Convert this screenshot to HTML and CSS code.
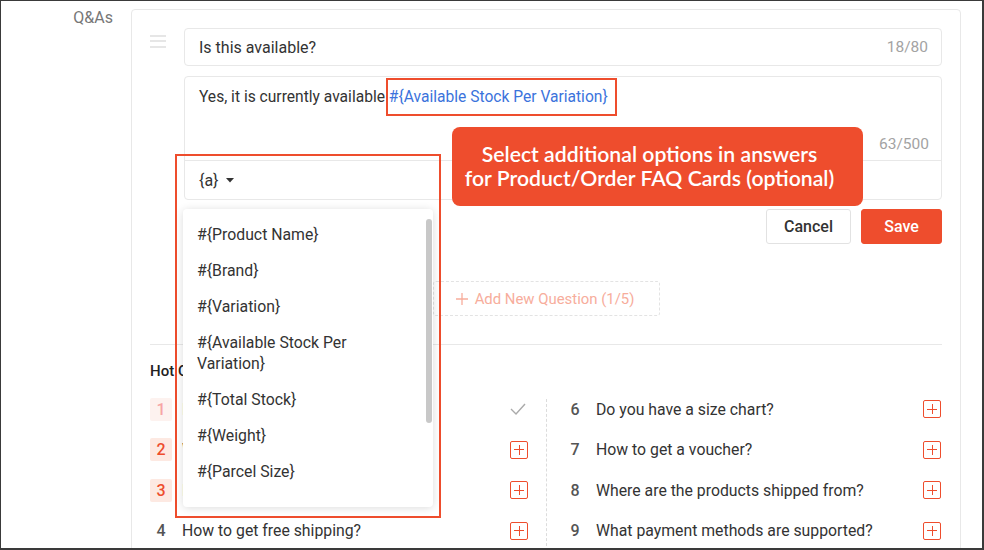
FILE: index.html
```html
<!DOCTYPE html>
<html>
<head>
<meta charset="utf-8">
<link rel="stylesheet" href="styles.css">
</head>
<body>
<div class="frame">
  <div class="section">
    <div class="label">Q&amp;As</div>
    <div class="card">
      <div class="qa-item">
        <div class="handle">
          <svg width="16" height="14" viewBox="0 0 16 14"><rect x="0" y="0" width="16" height="2" fill="#e6e6e6"/><rect x="0" y="5" width="16" height="2" fill="#e6e6e6"/><rect x="0" y="11" width="16" height="2" fill="#e6e6e6"/></svg>
        </div>
        <div class="qa-fields">
          <div class="q-input"><span class="q-text">Is this available?</span><span class="count">18/80</span></div>
          <div class="a-box">
            <div class="a-main">
              <div class="a-text">Yes, it is currently available <span class="var">#{Available Stock Per Variation}</span></div>
              <div class="count a-count">63/500</div>
            </div>
            <div class="a-toolbar"><span class="var-picker">{a}</span><svg class="caret" width="8" height="5" viewBox="0 0 8 5"><path d="M0 0h8L4 4.5z" fill="#333"/></svg></div>
          </div>
          <div class="actions"><button class="btn btn-cancel">Cancel</button><button class="btn btn-save">Save</button></div>
        </div>
      </div>
      <div class="add-row">
        <div class="add-btn"><svg width="12" height="12" viewBox="0 0 12 12"><path d="M6 0v12M0 6h12" stroke="#f7ad9c" stroke-width="1.3"/></svg><span>Add New Question (1/5)</span></div>
      </div>
      <div class="divider"></div>
      <div class="hot-title">Hot Questions</div>
      <div class="hot-grid">
        <div class="hot-col">
          <div class="hot-row faded"><span class="num badge">1</span><span class="hq">Is this available?</span><svg class="check" width="16" height="12" viewBox="0 0 16 12"><path d="M1 6l5 5L15 1" fill="none" stroke="#aaa" stroke-width="1.4"/></svg></div>
          <div class="hot-row"><span class="num badge">2</span><span class="hq">What is the shipping time?</span><span class="plus"></span></div>
          <div class="hot-row"><span class="num badge">3</span><span class="hq">Is the product authentic?</span><span class="plus"></span></div>
          <div class="hot-row"><span class="num">4</span><span class="hq">How to get free shipping?</span><span class="plus"></span></div>
        </div>
        <div class="hot-col right">
          <div class="hot-row"><span class="num">6</span><span class="hq">Do you have a size chart?</span><span class="plus"></span></div>
          <div class="hot-row"><span class="num">7</span><span class="hq">How to get a voucher?</span><span class="plus"></span></div>
          <div class="hot-row"><span class="num">8</span><span class="hq">Where are the products shipped from?</span><span class="plus"></span></div>
          <div class="hot-row"><span class="num">9</span><span class="hq">What payment methods are supported?</span><span class="plus"></span></div>
        </div>
      </div>
    </div>
  </div>

  <div class="mark mark-var"></div>
  <div class="mark mark-menu"></div>
  <div class="tooltip">Select additional options in answers<br>for Product/Order FAQ Cards (optional)</div>
  <div class="menu">
    <div class="menu-list">
      <div class="menu-item">#{Product Name}</div>
      <div class="menu-item">#{Brand}</div>
      <div class="menu-item">#{Variation}</div>
      <div class="menu-item">#{Available Stock Per Variation}</div>
      <div class="menu-item">#{Total Stock}</div>
      <div class="menu-item">#{Weight}</div>
      <div class="menu-item">#{Parcel Size}</div>
    </div>
    <div class="scrollbar"></div>
  </div>
</div>
</body>
</html>
```

FILE: styles.css
```css
* { box-sizing: border-box; }
html, body { margin: 0; padding: 0; background: #fff; }
body { font-family: Roboto, "Liberation Sans", sans-serif; color: #333; font-size: 16px; }

.frame {
  position: relative;
  width: 984px;
  height: 550px;
  overflow: hidden;
  border-style: solid;
  border-color: #3a3a3a;
  border-width: 1px 2px 2px 1px;
  background: #fff;
}

.section { display: flex; align-items: flex-start; padding-top: 8px; }
.label {
  width: 112px;
  text-align: right;
  color: #777;
  font-size: 16px;
  line-height: 18px;
  margin-right: 18px;
}
.card {
  width: 830px;
  height: 700px;
  border: 1px solid #e8e8e8;
  border-radius: 4px;
  padding: 18px 18px 0 18px;
}

.qa-item { display: flex; }
.handle { width: 16px; margin-right: 18px; padding-top: 7px; }
.handle svg { display: block; }
.qa-fields { flex: 1; display: flex; flex-direction: column; }

.q-input {
  height: 38px;
  border: 1px solid #e8e8e8;
  border-radius: 4px;
  padding: 0 13px 0 14px;
  display: flex;
  align-items: center;
  justify-content: space-between;
  font-size: 16px;
}
.count { color: #a3a3a3; font-size: 15.5px; }

.a-box {
  margin-top: 10px;
  border: 1px solid #e8e8e8;
  border-radius: 4px;
}
.a-main {
  height: 83px;
  padding: 10px 12px 5px 14px;
  display: flex;
  flex-direction: column;
  justify-content: space-between;
}
.a-text { line-height: 21px; font-size: 15.6px; }
.a-count { align-self: flex-end; line-height: 21px; }
.var { color: #3b73dc; }
.a-toolbar {
  height: 39px;
  border-top: 1px solid #e8e8e8;
  display: flex;
  align-items: center;
  padding-left: 14px;
}
.var-picker { font-size: 16px; color: #333; }
.caret { margin-left: 7px; }

.actions { display: flex; justify-content: flex-end; gap: 10px; margin-top: 9px; }
.btn {
  height: 35px;
  border-radius: 3px;
  font-family: Roboto, "Liberation Sans", sans-serif;
  font-size: 16px;
  font-weight: 500;
  padding: 0;
}
.btn-cancel { width: 85px; background: #fff; border: 1px solid #e2e2e2; color: #333; }
.btn-save { width: 81px; background: #ee4d2d; border: 1px solid #ee4d2d; color: #fff; }

.add-row { display: flex; justify-content: center; margin-top: 37px; }
.add-btn {
  width: 227px;
  height: 35px;
  border: 1px dashed #e3e3e3;
  border-radius: 3px;
  display: flex;
  align-items: center;
  justify-content: center;
  gap: 7px;
  color: #f7ad9c;
  font-size: 14.9px;
  padding-right: 2px;
}

.divider { height: 1px; background: #e8e8e8; margin-top: 28px; }
.hot-title { font-weight: 500; font-size: 15px; line-height: 21px; margin-top: 16px; color: #222; }

.hot-grid { display: flex; margin-top: 7px; }
.hot-col { width: 396px; padding-right: 18px; }
.hot-col.right { border-left: 1px dashed #dcdcdc; padding-left: 17px; padding-right: 1px; margin-top: 10px; }
.hot-col.right .hot-row:first-child { margin-top: -10px; }
.hot-row { height: 40.5px; display: flex; align-items: center; }
.num {
  width: 22px;
  height: 23px;
  display: flex;
  align-items: center;
  justify-content: center;
  font-size: 16px;
  font-weight: 500;
  color: #555;
  border-radius: 2px;
  flex: none;
}
.badge { background: #fde9e2; color: #ee4d2d; }
.faded .badge { background: #fdf2ef; color: #f7a5a5; }
.hq { flex: 1; margin-left: 10px; font-size: 15.8px; color: #333; white-space: nowrap; }
.check { margin-right: 2px; }
.plus {
  width: 18px;
  height: 18px;
  border: 1px solid #ee4d2d;
  border-radius: 2px;
  position: relative;
  flex: none;
}
.plus::before, .plus::after { content: ""; position: absolute; background: #ee4d2d; }
.plus::before { left: 3px; right: 3px; top: 7.5px; height: 1.2px; }
.plus::after { top: 3px; bottom: 3px; left: 7.5px; width: 1.2px; }

.mark { position: absolute; border: 2px solid #ee4d2d; }
.mark-var { left: 385px; top: 77px; width: 231px; height: 38px; }
.mark-menu { left: 174px; top: 153px; width: 266px; height: 364px; }

.tooltip {
  position: absolute;
  left: 451px;
  top: 126px;
  width: 411px;
  height: 79px;
  background: #ee4d2d;
  border-radius: 8px;
  color: #fff;
  font-family: Lato, "Open Sans", sans-serif;
  font-weight: 600;
  font-size: 21.2px;
  line-height: 24px;
  text-align: center;
  padding: 15px 16px 0 0;
}

.menu {
  position: absolute;
  left: 182px;
  top: 208px;
  width: 250px;
  height: 298px;
  background: #fff;
  border-radius: 4px;
  box-shadow: 0 1px 8px rgba(0,0,0,0.14);
  padding: 7px 0 0 0;
}
.menu-item {
  padding: 7.5px 30px 7.5px 14px;
  font-size: 15.8px;
  line-height: 21px;
  color: #333;
}
.scrollbar {
  position: absolute;
  right: 1px;
  top: 10px;
  width: 6px;
  height: 204px;
  border-radius: 3px;
  background: #c8c8c8;
}
```
